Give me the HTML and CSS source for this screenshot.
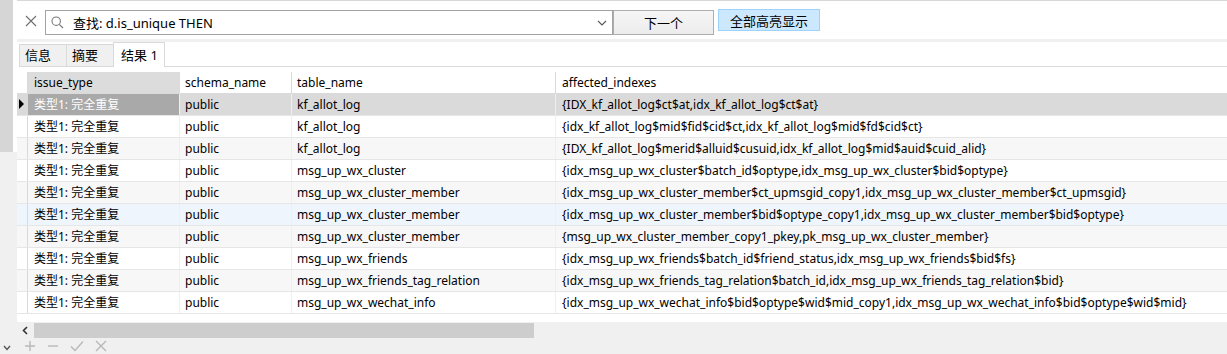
FILE: index.html
```html
<!DOCTYPE html>
<html>
<head>
<meta charset="utf-8">
<link rel="stylesheet" href="styles.css">
</head>
<body>
<div class="app">
  <div class="side"><div class="side-thumb"></div></div>
  <div class="main">
    <div class="findbar">
      <svg class="close-ico" width="12" height="12" viewBox="0 0 12 12"><path d="M1 1L11 11M11 1L1 11" stroke="#6e6e6e" stroke-width="1.1" fill="none"/></svg>
      <div class="findbox">
        <svg class="mag" width="13" height="13" viewBox="0 0 13 13"><circle cx="5.2" cy="5.2" r="4.2" stroke="#7a7a7a" stroke-width="1.1" fill="none"/><path d="M8.3 8.3L12 12" stroke="#7a7a7a" stroke-width="1.2"/></svg>
        <span class="findtext">查找: d.is_unique THEN</span>
        <svg class="chev" width="10" height="6" viewBox="0 0 10 6"><path d="M1 1L5 5L9 1" stroke="#555" stroke-width="1.1" fill="none"/></svg>
      </div>
      <button class="btn-next">下一个</button>
      <button class="btn-all">全部高亮显示</button>
    </div>
    <div class="band"></div>
    <div class="tabs">
      <div class="tab">信息</div>
      <div class="tab">摘要</div>
      <div class="tab active">结果 1</div>
      <div class="tab-fill"></div>
    </div>
    <div class="gridwrap">
      <div class="grid">
        <div class="row head">
          <div class="ind"></div>
          <div class="c c1 curhead">issue_type</div>
          <div class="c c2">schema_name</div>
          <div class="c c3">table_name</div>
          <div class="c c4">affected_indexes</div>
        </div>
        <div class="row sel">
          <div class="ind"><span class="tri"></span></div>
          <div class="c c1 cur">类型1: 完全重复</div>
          <div class="c c2">public</div>
          <div class="c c3">kf_allot_log</div>
          <div class="c c4">{IDX_kf_allot_log$ct$at,idx_kf_allot_log$ct$at}</div>
        </div>
        <div class="row">
          <div class="ind"></div>
          <div class="c c1">类型1: 完全重复</div>
          <div class="c c2">public</div>
          <div class="c c3">kf_allot_log</div>
          <div class="c c4">{idx_kf_allot_log$mid$fid$cid$ct,idx_kf_allot_log$mid$fd$cid$ct}</div>
        </div>
        <div class="row alt">
          <div class="ind"></div>
          <div class="c c1">类型1: 完全重复</div>
          <div class="c c2">public</div>
          <div class="c c3">kf_allot_log</div>
          <div class="c c4">{IDX_kf_allot_log$merid$alluid$cusuid,idx_kf_allot_log$mid$auid$cuid_alid}</div>
        </div>
        <div class="row">
          <div class="ind"></div>
          <div class="c c1">类型1: 完全重复</div>
          <div class="c c2">public</div>
          <div class="c c3">msg_up_wx_cluster</div>
          <div class="c c4">{idx_msg_up_wx_cluster$batch_id$optype,idx_msg_up_wx_cluster$bid$optype}</div>
        </div>
        <div class="row alt">
          <div class="ind"></div>
          <div class="c c1">类型1: 完全重复</div>
          <div class="c c2">public</div>
          <div class="c c3">msg_up_wx_cluster_member</div>
          <div class="c c4">{idx_msg_up_wx_cluster_member$ct_upmsgid_copy1,idx_msg_up_wx_cluster_member$ct_upmsgid}</div>
        </div>
        <div class="row hover">
          <div class="ind"></div>
          <div class="c c1">类型1: 完全重复</div>
          <div class="c c2">public</div>
          <div class="c c3">msg_up_wx_cluster_member</div>
          <div class="c c4">{idx_msg_up_wx_cluster_member$bid$optype_copy1,idx_msg_up_wx_cluster_member$bid$optype}</div>
        </div>
        <div class="row alt">
          <div class="ind"></div>
          <div class="c c1">类型1: 完全重复</div>
          <div class="c c2">public</div>
          <div class="c c3">msg_up_wx_cluster_member</div>
          <div class="c c4">{msg_up_wx_cluster_member_copy1_pkey,pk_msg_up_wx_cluster_member}</div>
        </div>
        <div class="row">
          <div class="ind"></div>
          <div class="c c1">类型1: 完全重复</div>
          <div class="c c2">public</div>
          <div class="c c3">msg_up_wx_friends</div>
          <div class="c c4">{idx_msg_up_wx_friends$batch_id$friend_status,idx_msg_up_wx_friends$bid$fs}</div>
        </div>
        <div class="row alt">
          <div class="ind"></div>
          <div class="c c1">类型1: 完全重复</div>
          <div class="c c2">public</div>
          <div class="c c3">msg_up_wx_friends_tag_relation</div>
          <div class="c c4">{idx_msg_up_wx_friends_tag_relation$batch_id,idx_msg_up_wx_friends_tag_relation$bid}</div>
        </div>
        <div class="row">
          <div class="ind"></div>
          <div class="c c1">类型1: 完全重复</div>
          <div class="c c2">public</div>
          <div class="c c3">msg_up_wx_wechat_info</div>
          <div class="c c4">{idx_msg_up_wx_wechat_info$bid$optype$wid$mid_copy1,idx_msg_up_wx_wechat_info$bid$optype$wid$mid}</div>
        </div>
      </div>
    </div>
    <div class="hscroll">
      <svg class="larr" width="6" height="9" viewBox="0 0 6 9"><path d="M5 1L1.5 4.5L5 8" stroke="#333" stroke-width="1.6" fill="none"/></svg>
      <div class="hthumb"></div>
    </div>
    <div class="toolbar">
      <svg class="tb-ico" width="12" height="12" viewBox="0 0 12 12"><path d="M6 1V11M1 6H11" stroke="#b8b8b8" stroke-width="1.4"/></svg>
      <svg class="tb-ico" width="12" height="12" viewBox="0 0 12 12"><path d="M1 6H11" stroke="#b8b8b8" stroke-width="1.4"/></svg>
      <svg class="tb-ico" width="14" height="12" viewBox="0 0 14 12"><path d="M1 6.5L5 10.5L13 1.5" stroke="#b8b8b8" stroke-width="1.4" fill="none"/></svg>
      <svg class="tb-ico" width="12" height="12" viewBox="0 0 12 12"><path d="M1 1L11 11M11 1L1 11" stroke="#b8b8b8" stroke-width="1.4"/></svg>
    </div>
  </div>
  <svg class="collapse" width="8" height="6" viewBox="0 0 8 6"><path d="M1 1L4 4.5L7 1" stroke="#555" stroke-width="1.4" fill="none"/></svg>
</div>
</body>
</html>
```

FILE: styles.css
```css
html, body {
  margin: 0;
  padding: 0;
  background: #ffffff;
}
body {
  width: 1227px;
  height: 354px;
  overflow: hidden;
  font-family: "Noto Sans", "Noto Sans CJK SC", sans-serif;
  font-size: 12px;
  color: #000;
}
.app {
  position: relative;
  display: flex;
  width: 1227px;
  height: 354px;
}
.side {
  width: 17px;
  flex: none;
  background: #f0f0f0;
}
.side-thumb {
  width: 13px;
  height: 152px;
  background: #d6d6d6;
  border-right: 4px solid #ffffff;
}
.main {
  flex: 1;
  display: flex;
  flex-direction: column;
  min-width: 0;
}
.findbar {
  height: 38px;
  border-top: 1px solid #d8d8d8;
  display: flex;
  align-items: flex-start;
}
.close-ico {
  margin: 14px 0 0 8px;
}
.findbox {
  margin: 9px 0 0 8px;
  width: 566px;
  height: 23px;
  border: 1px solid #a3a3a3;
  display: flex;
  align-items: center;
  background: #fff;
}
.mag {
  margin-left: 5px;
}
.findtext {
  margin-left: 9px;
  font-size: 13px;
  flex: 1;
}
.chev {
  margin-right: 5px;
}
.btn-next {
  margin: 9px 0 0 0;
  width: 101px;
  height: 25px;
  border: 1px solid #adadad;
  background: linear-gradient(#f6f6f6, #ececec);
  font-family: inherit;
  font-size: 13px;
  padding: 0;
  color: #000;
}
.btn-all {
  margin: 8px 0 0 4px;
  width: 102px;
  height: 22px;
  border: 1px solid #9fd2fb;
  background: #cce8ff;
  font-family: inherit;
  font-size: 13px;
  padding: 0;
  color: #000;
}
.band {
  height: 3px;
  background: #f0f0f0;
}
.tabs {
  height: 25px;
  display: flex;
  align-items: flex-end;
  padding-left: 2px;
}
.tab {
  height: 23px;
  box-sizing: border-box;
  width: 47px;
  border: 1px solid #d9d9d9;
  border-right: none;
  background: #f0f0f0;
  font-size: 13px;
  padding-left: 5px;
  line-height: 21px;
}
.tab.active {
  height: 25px;
  width: 52px;
  background: #ffffff;
  border-right: 1px solid #d9d9d9;
  border-bottom: none;
  padding-left: 7px;
  line-height: 24px;
}
.tab-fill {
  flex: 1;
  border-bottom: 1px solid #d9d9d9;
}
.gridwrap {
  flex: 1;
  background: #ffffff;
  padding-top: 5px;
  overflow: hidden;
}
.row {
  display: flex;
  height: 22px;
  border-bottom: 1px solid #e6e6e6;
  box-sizing: border-box;
  background: #fff;
}
.row.alt { background: #f7f7f7; }
.row.hover { background: #eef5fc; }
.row.sel { background: #dadada; }
.row.head {
  height: 22px;
  border-bottom: 1px solid #dadada;
  background: #fff;
}
.ind {
  width: 11px;
  flex: none;
  border-right: 1px solid #d9d9d9;
  box-sizing: border-box;
  position: relative;
}
.tri {
  position: absolute;
  left: 2px;
  top: 5px;
  width: 0;
  height: 0;
  border-top: 5px solid transparent;
  border-bottom: 5px solid transparent;
  border-left: 5px solid #000;
}
.c {
  flex: none;
  box-sizing: border-box;
  padding-left: 6px;
  line-height: 21px;
  white-space: nowrap;
  overflow: hidden;
  border-right: 1px solid #efefef;
}
.head .c { border-right: 1px solid #dadada; }
.c1 { width: 152px; }
.c2 { width: 112px; padding-left: 5px; }
.c3 { width: 264px; padding-left: 5px; }
.c4 { flex: 1; border-right: none; }
.head .c4 { border-right: none; }
.curhead { background: #dcdcdc; }
.cur { background: #a9a9a9; color: #fff; }
.hscroll {
  height: 16px;
  background: #f0f0f0;
  display: flex;
  align-items: center;
}
.larr { margin-left: 5px; }
.hthumb {
  margin-left: 6px;
  width: 500px;
  height: 15px;
  background: #cdcdcd;
}
.toolbar {
  height: 16px;
  background: #f0f0f0;
  display: flex;
  align-items: center;
  gap: 11px;
  padding-left: 7px;
}
.collapse {
  position: absolute;
  left: 3px;
  top: 345px;
}
```
